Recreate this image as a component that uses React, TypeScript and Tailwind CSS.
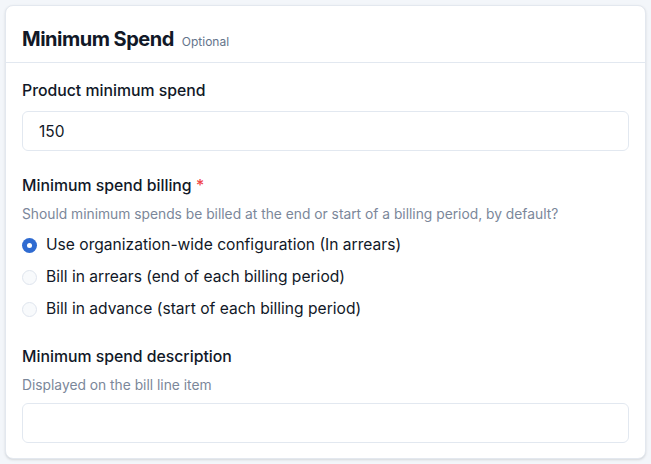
import { useState } from "react";

const options = [
  { id: "org", label: "Use organization-wide configuration (In arrears)" },
  { id: "arrears", label: "Bill in arrears (end of each billing period)" },
  { id: "advance", label: "Bill in advance (start of each billing period)" },
];

export default function App() {
  const [billing, setBilling] = useState("org");
  const [spend, setSpend] = useState("150");
  const [desc, setDesc] = useState("");

  return (
    <div
      className="min-h-[464px] bg-[#f3f6fa] p-[5px] text-[#111827]"
      style={{ fontFamily: "Inter, 'Noto Sans', sans-serif" }}
    >
      <section className="overflow-hidden rounded-lg border border-[#e3e8ef] bg-white shadow-sm">
        {/* header */}
        <div className="flex items-baseline gap-2 border-b border-[#e2e8f0] px-4 pb-[9px] pt-[19px]">
          <h2 className="text-[20px] font-bold leading-7 tracking-tight">Minimum Spend</h2>
          <span className="text-[12px] text-[#64748b]">Optional</span>
        </div>

        <div className="px-4 pb-[15px] pt-4">
          <label className="block text-[15.8px] font-medium leading-6">Product minimum spend</label>
          <input
            value={spend}
            onChange={(e) => setSpend(e.target.value)}
            className="mt-2 h-10 w-full rounded-md border border-[#e2e8f0] px-4 text-[15.5px] outline-none"
          />

          <div className="mt-[23px] text-[15.8px] font-medium leading-6">
            Minimum spend billing <span className="text-[#ef4444]">*</span>
          </div>
          <p className="mt-[6px] text-[13.8px] leading-5 text-[#7b879a]">
            Should minimum spends be billed at the end or start of a billing period, by default?
          </p>

          <div className="mt-[5px] flex flex-col">
            {options.map((o) => {
              const on = billing === o.id;
              return (
                <label
                  key={o.id}
                  className="flex h-8 cursor-pointer items-center gap-[9px]"
                  onClick={() => setBilling(o.id)}
                >
                  <span
                    className={
                      on
                        ? "flex h-[15px] w-[15px] items-center justify-center rounded-full bg-[#2f6bd1]"
                        : "h-[15px] w-[15px] rounded-full border border-[#dfe5ee] bg-[#f8fafc]"
                    }
                  >
                    {on && <span className="h-[5px] w-[5px] rounded-full bg-white" />}
                  </span>
                  <span className="text-[15.6px]">{o.label}</span>
                </label>
              );
            })}
          </div>

          <div className="mt-5 text-[15.8px] font-medium leading-6">Minimum spend description</div>
          <p className="mt-[6px] text-[13.8px] leading-5 text-[#7b879a]">Displayed on the bill line item</p>
          <input
            value={desc}
            onChange={(e) => setDesc(e.target.value)}
            className="mt-2 h-10 w-full rounded-md border border-[#e2e8f0] px-4 text-[15.5px] outline-none"
          />
        </div>
      </section>
    </div>
  );
}
